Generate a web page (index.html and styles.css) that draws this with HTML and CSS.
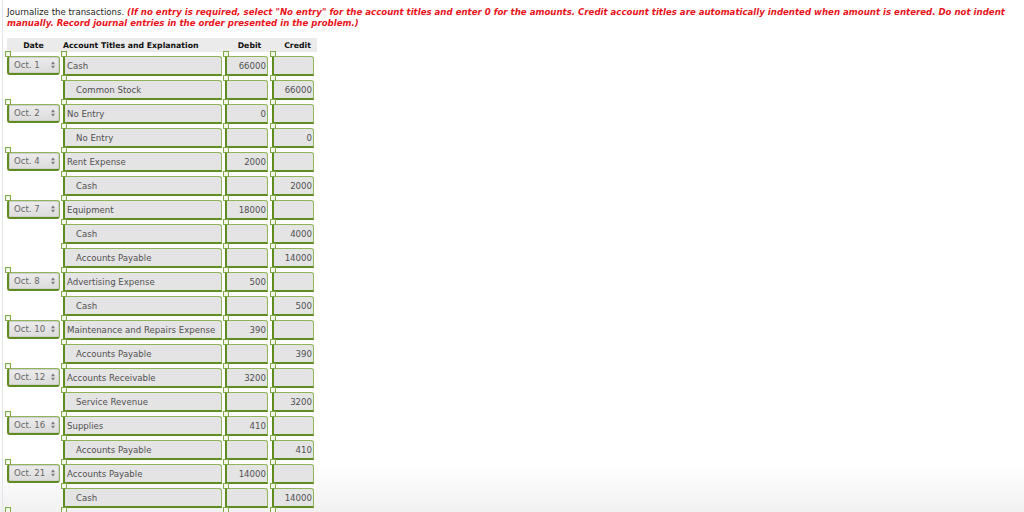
FILE: index.html
```html
<!DOCTYPE html>
<html>
<head>
<meta charset="utf-8">
<link rel="stylesheet" href="styles.css">
</head>
<body>
<div class="page">
  <p class="intro">Journalize the transactions. <em class="warn">(If no entry is required, select "No entry" for the account titles and enter 0 for the amounts. Credit account titles are automatically indented when amount is entered. Do not indent manually. Record journal entries in the order presented in the problem.)</em></p>
  <div class="table">
    <div class="head">
      <div class="h-date">Date</div>
      <div class="h-acct">Account Titles and Explanation</div>
      <div class="h-debit">Debit</div>
      <div class="h-credit">Credit</div>
    </div>

    <div class="row">
      <div class="cell date"><span class="chk"></span><span class="sel">Oct. 1</span><svg class="arr" viewBox="0 0 4 8"><path d="M0 3.2L2 0.6L4 3.2ZM0 4.8L2 7.4L4 4.8Z"/></svg></div>
      <div class="cell acct"><span class="chk"></span>Cash</div>
      <div class="cell num"><span class="chk"></span>66000</div>
      <div class="cell num"><span class="chk"></span></div>
    </div>
    <div class="row">
      <div class="blank"></div>
      <div class="cell acct cr"><span class="chk"></span>Common Stock</div>
      <div class="cell num"><span class="chk"></span></div>
      <div class="cell num"><span class="chk"></span>66000</div>
    </div>

    <div class="row">
      <div class="cell date"><span class="chk"></span><span class="sel">Oct. 2</span><svg class="arr" viewBox="0 0 4 8"><path d="M0 3.2L2 0.6L4 3.2ZM0 4.8L2 7.4L4 4.8Z"/></svg></div>
      <div class="cell acct"><span class="chk"></span>No Entry</div>
      <div class="cell num"><span class="chk"></span>0</div>
      <div class="cell num"><span class="chk"></span></div>
    </div>
    <div class="row">
      <div class="blank"></div>
      <div class="cell acct cr"><span class="chk"></span>No Entry</div>
      <div class="cell num"><span class="chk"></span></div>
      <div class="cell num"><span class="chk"></span>0</div>
    </div>

    <div class="row">
      <div class="cell date"><span class="chk"></span><span class="sel">Oct. 4</span><svg class="arr" viewBox="0 0 4 8"><path d="M0 3.2L2 0.6L4 3.2ZM0 4.8L2 7.4L4 4.8Z"/></svg></div>
      <div class="cell acct"><span class="chk"></span>Rent Expense</div>
      <div class="cell num"><span class="chk"></span>2000</div>
      <div class="cell num"><span class="chk"></span></div>
    </div>
    <div class="row">
      <div class="blank"></div>
      <div class="cell acct cr"><span class="chk"></span>Cash</div>
      <div class="cell num"><span class="chk"></span></div>
      <div class="cell num"><span class="chk"></span>2000</div>
    </div>

    <div class="row">
      <div class="cell date"><span class="chk"></span><span class="sel">Oct. 7</span><svg class="arr" viewBox="0 0 4 8"><path d="M0 3.2L2 0.6L4 3.2ZM0 4.8L2 7.4L4 4.8Z"/></svg></div>
      <div class="cell acct"><span class="chk"></span>Equipment</div>
      <div class="cell num"><span class="chk"></span>18000</div>
      <div class="cell num"><span class="chk"></span></div>
    </div>
    <div class="row">
      <div class="blank"></div>
      <div class="cell acct cr"><span class="chk"></span>Cash</div>
      <div class="cell num"><span class="chk"></span></div>
      <div class="cell num"><span class="chk"></span>4000</div>
    </div>
    <div class="row">
      <div class="blank"></div>
      <div class="cell acct cr"><span class="chk"></span>Accounts Payable</div>
      <div class="cell num"><span class="chk"></span></div>
      <div class="cell num"><span class="chk"></span>14000</div>
    </div>

    <div class="row">
      <div class="cell date"><span class="chk"></span><span class="sel">Oct. 8</span><svg class="arr" viewBox="0 0 4 8"><path d="M0 3.2L2 0.6L4 3.2ZM0 4.8L2 7.4L4 4.8Z"/></svg></div>
      <div class="cell acct"><span class="chk"></span>Advertising Expense</div>
      <div class="cell num"><span class="chk"></span>500</div>
      <div class="cell num"><span class="chk"></span></div>
    </div>
    <div class="row">
      <div class="blank"></div>
      <div class="cell acct cr"><span class="chk"></span>Cash</div>
      <div class="cell num"><span class="chk"></span></div>
      <div class="cell num"><span class="chk"></span>500</div>
    </div>

    <div class="row">
      <div class="cell date"><span class="chk"></span><span class="sel">Oct. 10</span><svg class="arr" viewBox="0 0 4 8"><path d="M0 3.2L2 0.6L4 3.2ZM0 4.8L2 7.4L4 4.8Z"/></svg></div>
      <div class="cell acct"><span class="chk"></span>Maintenance and Repairs Expense</div>
      <div class="cell num"><span class="chk"></span>390</div>
      <div class="cell num"><span class="chk"></span></div>
    </div>
    <div class="row">
      <div class="blank"></div>
      <div class="cell acct cr"><span class="chk"></span>Accounts Payable</div>
      <div class="cell num"><span class="chk"></span></div>
      <div class="cell num"><span class="chk"></span>390</div>
    </div>

    <div class="row">
      <div class="cell date"><span class="chk"></span><span class="sel">Oct. 12</span><svg class="arr" viewBox="0 0 4 8"><path d="M0 3.2L2 0.6L4 3.2ZM0 4.8L2 7.4L4 4.8Z"/></svg></div>
      <div class="cell acct"><span class="chk"></span>Accounts Receivable</div>
      <div class="cell num"><span class="chk"></span>3200</div>
      <div class="cell num"><span class="chk"></span></div>
    </div>
    <div class="row">
      <div class="blank"></div>
      <div class="cell acct cr"><span class="chk"></span>Service Revenue</div>
      <div class="cell num"><span class="chk"></span></div>
      <div class="cell num"><span class="chk"></span>3200</div>
    </div>

    <div class="row">
      <div class="cell date"><span class="chk"></span><span class="sel">Oct. 16</span><svg class="arr" viewBox="0 0 4 8"><path d="M0 3.2L2 0.6L4 3.2ZM0 4.8L2 7.4L4 4.8Z"/></svg></div>
      <div class="cell acct"><span class="chk"></span>Supplies</div>
      <div class="cell num"><span class="chk"></span>410</div>
      <div class="cell num"><span class="chk"></span></div>
    </div>
    <div class="row">
      <div class="blank"></div>
      <div class="cell acct cr"><span class="chk"></span>Accounts Payable</div>
      <div class="cell num"><span class="chk"></span></div>
      <div class="cell num"><span class="chk"></span>410</div>
    </div>

    <div class="row">
      <div class="cell date"><span class="chk"></span><span class="sel">Oct. 21</span><svg class="arr" viewBox="0 0 4 8"><path d="M0 3.2L2 0.6L4 3.2ZM0 4.8L2 7.4L4 4.8Z"/></svg></div>
      <div class="cell acct"><span class="chk"></span>Accounts Payable</div>
      <div class="cell num"><span class="chk"></span>14000</div>
      <div class="cell num"><span class="chk"></span></div>
    </div>
    <div class="row">
      <div class="blank"></div>
      <div class="cell acct cr"><span class="chk"></span>Cash</div>
      <div class="cell num"><span class="chk"></span></div>
      <div class="cell num"><span class="chk"></span>14000</div>
    </div>

    <div class="row">
      <div class="cell date"><span class="chk"></span><span class="sel"></span></div>
      <div class="cell acct"><span class="chk"></span></div>
      <div class="cell num"><span class="chk"></span></div>
      <div class="cell num"><span class="chk"></span></div>
    </div>
  </div>
</div>
</body>
</html>
```

FILE: styles.css
```css
html, body {
  margin: 0;
  padding: 0;
}
html {
  background: #ffffff;
}
body {
  font-family: "DejaVu Sans", Verdana, sans-serif;
  color: #222;
  overflow: hidden;
  height: 512px;
  background: linear-gradient(to bottom, #ffffff 0px, #ffffff 465px, #f1f1f1 512px);
}
.page {
  margin-left: 2px;
  border-left: 1px solid #dfe5ec;
  padding: 7px 0 0 4px;
  height: 512px;
  box-sizing: border-box;
}
.intro {
  margin: 0;
  font-size: 8.6px;
  line-height: 11px;
  color: #222;
  width: 1012px;
}
.warn {
  color: #e8141c;
  font-weight: bold;
  font-style: italic;
}
.table {
  margin-top: 9px;
  width: 310px;
}
.head {
  display: grid;
  grid-template-columns: 53px 159px 43px 47px;
  column-gap: 3px;
  background: #ebebeb;
  height: 14px;
  align-items: center;
  font-size: 7.75px;
  font-weight: bold;
  color: #111;
  margin-bottom: 4px;
}
.h-date { text-align: center; }
.h-debit { text-align: center; padding-left: 6px; }
.h-credit { text-align: center; padding-left: 6px; }
.row {
  display: grid;
  grid-template-columns: 53px 159px 43px 43px;
  column-gap: 3px;
  height: 20px;
  margin-bottom: 4px;
}
.row .cell:nth-child(4) { margin-left: 1px; }
.cell {
  position: relative;
  box-sizing: border-box;
  border: 1px solid #8fb45a;
  border-left: 2px solid #5e8c1f;
  border-bottom: 2px solid #5e8c1f;
  border-top-right-radius: 3px;
  background: #e4e4e4;
  font-size: 8.6px;
  color: #505050;
  display: flex;
  align-items: center;
  white-space: nowrap;
}
.acct { padding-left: 2px; }
.acct.cr { padding-left: 11px; }
.num {
  justify-content: flex-end;
  padding-right: 1px;
}
.date {
  border-radius: 3px;
  background: linear-gradient(#ececec, #dcdcdc);
  padding-left: 5px;
  height: 19px;
  box-shadow: inset 0 0 0 1px #d0d0d0;
}
.sel {
  flex: 1;
  color: #666;
}
.arr {
  width: 4px;
  height: 8px;
  fill: #777;
  margin-right: 4px;
}
.chk {
  position: absolute;
  left: -4px;
  top: -6px;
  width: 4px;
  height: 4px;
  border: 1px solid #7fa84a;
  background: #f4f8ea;
}
```
